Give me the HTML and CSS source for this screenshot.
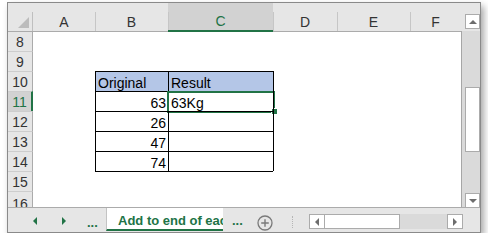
FILE: index.html
```html
<!DOCTYPE html>
<html>
<head>
<meta charset="utf-8">
<link rel="stylesheet" href="styles.css">
</head>
<body>
<div class="window">
  <div class="main">
    <div class="sheet">
      <div class="corner"><span class="tri"></span></div>
      <div class="ch first">A</div>
      <div class="ch">B</div>
      <div class="ch sel">C</div>
      <div class="ch">D</div>
      <div class="ch">E</div>
      <div class="ch">F</div>

      <div class="rh first">8</div>
      <div class="c"></div><div class="c"></div><div class="c"></div><div class="c"></div><div class="c"></div><div class="c"></div>

      <div class="rh">9</div>
      <div class="c"></div><div class="c"></div><div class="c"></div><div class="c"></div><div class="c"></div><div class="c"></div>

      <div class="rh">10</div>
      <div class="c"></div>
      <div class="c tl tt hd">Original</div>
      <div class="c tl tt hd">Result</div>
      <div class="c tl"></div><div class="c"></div><div class="c"></div>

      <div class="rh sel">11</div>
      <div class="c"></div>
      <div class="c tl tt num">63</div>
      <div class="c tl tt">63Kg<span class="selbox"></span><span class="handle"></span></div>
      <div class="c tl"></div><div class="c"></div><div class="c"></div>

      <div class="rh">12</div>
      <div class="c"></div>
      <div class="c tl tt num">26</div>
      <div class="c tl tt"></div>
      <div class="c tl"></div><div class="c"></div><div class="c"></div>

      <div class="rh">13</div>
      <div class="c"></div>
      <div class="c tl tt num">47</div>
      <div class="c tl tt"></div>
      <div class="c tl"></div><div class="c"></div><div class="c"></div>

      <div class="rh">14</div>
      <div class="c"></div>
      <div class="c tl tt num">74</div>
      <div class="c tl tt"></div>
      <div class="c tl"></div><div class="c"></div><div class="c"></div>

      <div class="rh">15</div>
      <div class="c"></div>
      <div class="c tt"></div>
      <div class="c tt"></div>
      <div class="c"></div><div class="c"></div><div class="c"></div>

      <div class="rh last">16</div>
      <div class="c"></div><div class="c"></div><div class="c"></div><div class="c"></div><div class="c"></div><div class="c"></div>
    </div>
    <div class="vscroll">
      <div class="vtop"><div class="sbtn"><span class="ar-up"></span></div></div>
      <div class="vtrack">
        <div class="vthumb"></div>
        <div class="sbtn down"><span class="ar-down"></span></div>
      </div>
    </div>
  </div>
  <div class="tabbar">
    <div class="nav">
      <span class="ar-left green"></span>
      <span class="ar-right green"></span>
      <span class="dots">...</span>
    </div>
    <div class="tab"><span class="tabtext">Add to end of each</span></div>
    <div class="more">...</div>
    <svg class="plus" width="16" height="16" viewBox="0 0 16 16">
      <circle cx="8" cy="8" r="7" fill="none" stroke="#7a7a7a" stroke-width="1.3"/>
      <path d="M8 4.2v7.6M4.2 8h7.6" stroke="#7a7a7a" stroke-width="1.4" fill="none"/>
    </svg>
    <div class="divider"></div>
    <div class="hscroll">
      <div class="hbtn"><span class="ar-left gray"></span></div>
      <div class="hthumb"></div>
      <div class="htrack"></div>
      <div class="hbtn"><span class="ar-right gray"></span></div>
    </div>
  </div>
</div>
</body>
</html>
```

FILE: styles.css
```css
* { box-sizing: border-box; }
html, body { margin: 0; background: #fff; }
body { font-family: "Liberation Sans", Arial, sans-serif; }

.window {
  margin: 2px 0 0 7px;
  width: 474px;
  height: 231px;
  border: 1px solid #8a8a8a;
  box-shadow: 3px 4px 7px rgba(0, 0, 0, 0.35);
  background: #fff;
  display: flex;
  flex-direction: column;
  overflow: hidden;
}

.main { display: flex; height: 204px; }

.sheet {
  display: grid;
  grid-template-columns: 25px 62px 73px 105px 64px 73px 51px;
  grid-template-rows: 29px 19px repeat(7, 20px) 16px;
  width: 453px;
  overflow: hidden;
}

.corner {
  background: #e6e6e6 linear-gradient(#bfbfbf, #bfbfbf) right 9px / 1px 20px no-repeat;
  border-bottom: 1px solid #ababab;
  position: relative;
}
.tri {
  position: absolute;
  right: 4px;
  bottom: 3px;
  width: 0;
  height: 0;
  border-left: 11px solid transparent;
  border-bottom: 11px solid #bcbcbc;
}

.ch {
  background: #e6e6e6 linear-gradient(#c6c6c6, #c6c6c6) 0 9px / 1px 19px no-repeat;
  border-bottom: 1px solid #ababab;
  display: flex;
  align-items: center;
  justify-content: center;
  padding-top: 9px;
  font-size: 14px;
  color: #333;
}
.ch.first { background-image: none; }
.ch.sel {
  background-color: #d2d2d2;
  border-bottom: 2px solid #217346;
  color: #217346;
}

.rh {
  background: #e6e6e6;
  border-right: 1px solid #ababab;
  border-top: 1px solid #cdcdcd;
  display: flex;
  align-items: center;
  justify-content: center;
  padding-top: 1px;
  font-size: 14px;
  color: #333;
  overflow: hidden;
}
.rh.first { border-top: none; }
.rh.last { align-items: flex-start; padding-top: 4px; }
.rh.sel {
  background: #d2d2d2;
  border-right: 2px solid #217346;
  color: #217346;
}

.c {
  position: relative;
  display: flex;
  align-items: center;
  padding: 2px 2px 0 2px;
  font-size: 14px;
  color: #000;
}
.tl { border-left: 1px solid #000; }
.tt { border-top: 1px solid #000; }
.hd { background: #b4c6e7; }
.num { justify-content: flex-end; }

.selbox {
  position: absolute;
  left: -2px;
  top: -1px;
  width: 108px;
  height: 22px;
  border: 2px solid #217346;
}
.handle {
  position: absolute;
  left: 102px;
  top: 16px;
  width: 7px;
  height: 7px;
  background: #217346;
  border: 1px solid #fff;
}

.vscroll { width: 19px; display: flex; flex-direction: column; }
.vtop {
  height: 28px;
  background: #e6e6e6;
  padding: 11px 0 0 4px;
}
.vtrack {
  flex: 1;
  background: #dadada;
  border-left: 1px solid #a6a6a6;
  display: flex;
  flex-direction: column;
  padding-left: 3px;
}
.sbtn {
  width: 15px;
  height: 15px;
  background: #fff;
  border: 1px solid #ababab;
  display: flex;
  align-items: center;
  justify-content: center;
}
.sbtn.down { margin-top: auto; height: 14px; border-bottom: none; }
.vthumb {
  margin-top: 56px;
  width: 15px;
  height: 65px;
  background: #fff;
  border: 1px solid #ababab;
}
.ar-up {
  width: 0; height: 0;
  border-left: 4px solid transparent;
  border-right: 4px solid transparent;
  border-bottom: 4px solid #6d6d6d;
}
.ar-down {
  width: 0; height: 0;
  border-left: 4px solid transparent;
  border-right: 4px solid transparent;
  border-top: 4px solid #6d6d6d;
}

.tabbar {
  height: 25px;
  border-top: 1px solid #ababab;
  background: #e6e6e6;
  display: flex;
  align-items: flex-start;
}
.nav {
  width: 98px;
  height: 24px;
  display: flex;
  align-items: center;
  padding: 2px 0 0 25px;
}
.ar-left {
  width: 0; height: 0;
  border-top: 4px solid transparent;
  border-bottom: 4px solid transparent;
  border-right: 4px solid #217346;
}
.ar-right {
  width: 0; height: 0;
  border-top: 4px solid transparent;
  border-bottom: 4px solid transparent;
  border-left: 4px solid #217346;
  margin-left: 25px;
}
.ar-left.gray { border-right-color: #6d6d6d; }
.ar-right.gray { border-left-color: #6d6d6d; margin-left: 0; }
.dots {
  margin-left: 21px;
  font-size: 13px;
  font-weight: bold;
  color: #217346;
  padding-top: 2px;
}
.tab {
  width: 117px;
  height: 23px;
  background: #fff;
  border-left: 1px solid #c3c3c3;
  border-bottom: 2px solid #217346;
  padding: 3px 0 0 11px;
  overflow: hidden;
  white-space: nowrap;
}
.tabtext {
  font-size: 13px;
  font-weight: bold;
  color: #217346;
}
.more {
  width: 34px;
  height: 24px;
  padding: 5px 0 0 9px;
  font-size: 13px;
  font-weight: bold;
  color: #217346;
}
.plus { margin-top: 7px; display: block; }
.divider {
  margin: 8px 0 0 19px;
  width: 1px;
  height: 12px;
  border-left: 1px dotted #b5b5b5;
}
.hscroll {
  margin: 6px 0 0 16px;
  width: 154px;
  height: 15px;
  display: flex;
}
.hbtn {
  width: 16px;
  height: 15px;
  background: #fff;
  border: 1px solid #ababab;
  display: flex;
  align-items: center;
  justify-content: center;
}
.hthumb {
  width: 75px;
  height: 15px;
  background: #fff;
  border: 1px solid #ababab;
  border-left: none;
}
.htrack { flex: 1; background: #dadada; }
```
